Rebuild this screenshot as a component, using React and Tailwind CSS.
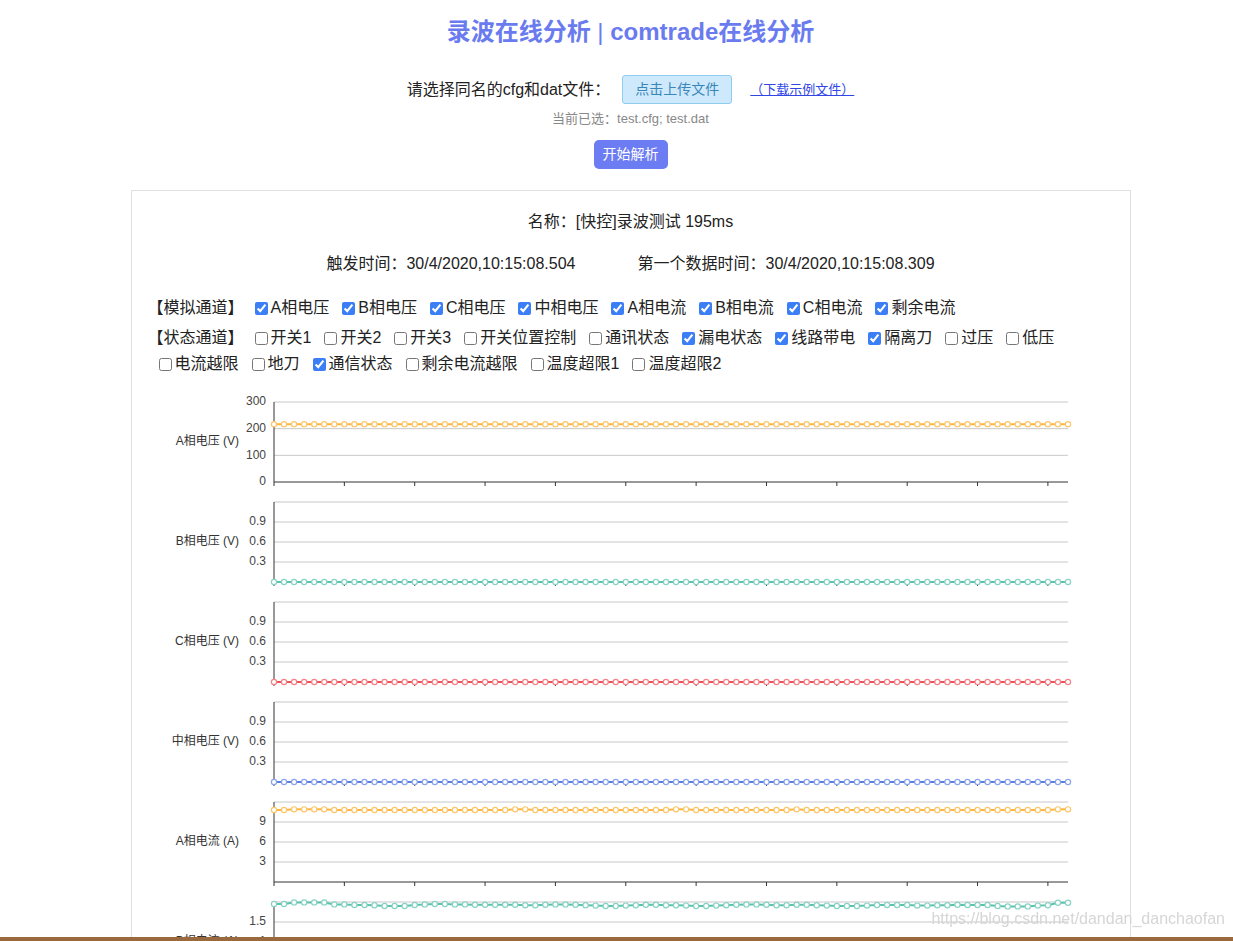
import { useState } from 'react'

const analogChannels = [
  { name: 'A相电压', checked: true },
  { name: 'B相电压', checked: true },
  { name: 'C相电压', checked: true },
  { name: '中相电压', checked: true },
  { name: 'A相电流', checked: true },
  { name: 'B相电流', checked: true },
  { name: 'C相电流', checked: true },
  { name: '剩余电流', checked: true },
]

const statusChannels = [
  { name: '开关1', checked: false },
  { name: '开关2', checked: false },
  { name: '开关3', checked: false },
  { name: '开关位置控制', checked: false },
  { name: '通讯状态', checked: false },
  { name: '漏电状态', checked: true },
  { name: '线路带电', checked: true },
  { name: '隔离刀', checked: true },
  { name: '过压', checked: false },
  { name: '低压', checked: false },
  { name: '电流越限', checked: false },
  { name: '地刀', checked: false },
  { name: '通信状态', checked: true },
  { name: '剩余电流越限', checked: false },
  { name: '温度超限1', checked: false },
  { name: '温度超限2', checked: false },
]

const N = 80
const flat = (v) => Array.from({ length: N }, () => v)

// A相电流 sits around 10.8A with a couple of small bumps
const aCurrent = Array.from({ length: N }, (_, i) =>
  [2, 3, 4, 5, 24, 25, 40, 41, 52, 78, 79].includes(i) ? 10.9 : 10.8
)

const bCurrent = [
  1.95, 1.95, 1.99, 1.99, 1.99, 1.99, 1.94, 1.94, 1.925, 1.925,
  1.92, 1.9, 1.9, 1.9, 1.925, 1.94, 1.95, 1.95, 1.94, 1.94,
  1.93, 1.93, 1.93, 1.93, 1.93, 1.92, 1.92, 1.93, 1.94, 1.94,
  1.93, 1.92, 1.91, 1.9, 1.9, 1.91, 1.92, 1.93, 1.93, 1.92,
  1.92, 1.91, 1.9, 1.9, 1.91, 1.92, 1.93, 1.94, 1.94, 1.93,
  1.92, 1.92, 1.93, 1.93, 1.92, 1.91, 1.9, 1.9, 1.9, 1.91,
  1.925, 1.925, 1.925, 1.925, 1.91, 1.91, 1.92, 1.92, 1.93, 1.925,
  1.925, 1.925, 1.9, 1.89, 1.89, 1.89, 1.91, 1.92, 1.98, 1.98,
]

const cCurrent = Array.from({ length: N }, (_, i) => 1.2 + Math.sin(i / 6) * 0.04)
const residual = Array.from({ length: N }, (_, i) => 18 + Math.cos(i / 5) * 0.6)

const charts = [
  { name: 'A相电压', unit: 'V', max: 300, grid: [100, 200, 300], labels: [0, 100, 200, 300], color: '#fdb641', marker: '#fcc66a', values: flat(217) },
  { name: 'B相电压', unit: 'V', max: 1.2, grid: [0.3, 0.6, 0.9, 1.2], labels: [0.3, 0.6, 0.9], color: '#5bc2ae', marker: '#86d3c4', values: flat(0) },
  { name: 'C相电压', unit: 'V', max: 1.2, grid: [0.3, 0.6, 0.9, 1.2], labels: [0.3, 0.6, 0.9], color: '#ef5058', marker: '#f48288', values: flat(0) },
  { name: '中相电压', unit: 'V', max: 1.2, grid: [0.3, 0.6, 0.9, 1.2], labels: [0.3, 0.6, 0.9], color: '#5a7de2', marker: '#8aa3ec', values: flat(0) },
  { name: 'A相电流', unit: 'A', max: 12, grid: [3, 6, 9, 12], labels: [3, 6, 9], color: '#fdb641', marker: '#fcc66a', values: aCurrent },
  { name: 'B相电流', unit: 'A', max: 2, grid: [0.5, 1, 1.5, 2], labels: [0.5, 1, 1.5], color: '#5bc2ae', marker: '#86d3c4', values: bCurrent },
  { name: 'C相电流', unit: 'A', max: 1.5, grid: [0.5, 1, 1.5], labels: [0.5, 1], color: '#ef5058', marker: '#f48288', values: cCurrent },
  { name: '剩余电流', unit: 'mA', max: 20, grid: [5, 10, 15, 20], labels: [5, 10, 15], color: '#5a7de2', marker: '#8aa3ec', values: residual },
]

const PLOT_L = 142
const PLOT_R = 936
const PLOT_T = 10
const PLOT_H = 80

const WaveChart = ({ name, unit, max, grid, labels, color, marker, values }) => {
  const step = (PLOT_R - PLOT_L) / (values.length - 1)
  const y = (v) => PLOT_T + PLOT_H - (v / max) * PLOT_H
  const pts = values.map((v, i) => [PLOT_L + i * step, y(v)])
  const ticks = []
  for (let i = 0; i < values.length; i += 7) ticks.push(PLOT_L + i * step)

  return (
    <svg width="997" height="100" className="block">
      {grid.map((g) => (
        <line key={g} x1={PLOT_L} x2={PLOT_R} y1={y(g)} y2={y(g)} stroke="#c8c8c8" strokeWidth="1" />
      ))}
      {labels.map((l) => (
        <text key={l} x="134" y={y(l)} textAnchor="end" dominantBaseline="middle" fontSize="12" fill="#444">
          {l}
        </text>
      ))}
      <text x="107" y="50" textAnchor="end" dominantBaseline="middle" fontSize="12" fill="#333">
        {name} ({unit})
      </text>
      <line x1={PLOT_L} x2={PLOT_L} y1={PLOT_T} y2={PLOT_T + PLOT_H} stroke="#333" strokeWidth="1" />
      <line x1={PLOT_L} x2={PLOT_R} y1={PLOT_T + PLOT_H} y2={PLOT_T + PLOT_H} stroke="#333" strokeWidth="1" />
      {ticks.map((t) => (
        <line key={t} x1={t} x2={t} y1={PLOT_T + PLOT_H} y2={PLOT_T + PLOT_H + 4} stroke="#333" strokeWidth="1" />
      ))}
      <polyline
        points={pts.map((p) => p.join(',')).join(' ')}
        fill="none"
        stroke={color}
        strokeWidth="2"
        strokeLinejoin="round"
      />
      {pts.map((p, i) => (
        <circle key={i} cx={p[0]} cy={p[1]} r="2.6" fill="#fff" stroke={marker} strokeWidth="1.2" />
      ))}
    </svg>
  )
}

const ChannelItem = ({ name, checked }) => {
  const [on, setOn] = useState(checked)
  return (
    <label className="inline-flex items-center ml-[11px] mr-[2px] whitespace-nowrap">
      <input
        type="checkbox"
        checked={on}
        onChange={() => setOn(!on)}
        className="m-0 mr-[3px] w-[13px] h-[13px] accent-[#3b7ef5]"
      />
      <span>{name}</span>
    </label>
  )
}

const App = () => {
  return (
    <div className="min-h-screen bg-white pl-[28px] pt-[16px] text-[#222] font-['Liberation_Sans','Noto_Sans_CJK_SC',sans-serif]">
      <h1 className="text-center text-[24px] leading-[32px] font-bold text-[#6a7bef]">
        录波在线分析 <span className="font-normal">|</span> comtrade在线分析
      </h1>

      <div className="mt-[27px] h-[29px] flex items-center justify-center">
        <span className="text-[16px]">请选择同名的cfg和dat文件：</span>
        <button className="ml-[12px] h-[29px] px-[12px] rounded-[3px] border border-[#8fcdf0] bg-[#cde9fb] text-[14px] text-[#3a86b8]">
          点击上传文件
        </button>
        <a href="#" className="ml-[18px] text-[13px] text-[#2f45e6] underline">
          （下载示例文件）
        </a>
      </div>

      <p className="mt-[5px] text-center text-[13px] leading-[20px] text-[#888]">当前已选：test.cfg; test.dat</p>

      <div className="mt-[11px] flex justify-center">
        <button className="h-[29px] px-[9px] rounded-[5px] bg-[#6c7cf2] text-[14px] text-white">开始解析</button>
      </div>

      <div className="mt-[21px] mx-auto w-[1000px] border border-[#e0e0e0] pb-[40px]">
        <p className="pt-[20px] text-center text-[16px] leading-[22px]">名称：[快控]录波测试 195ms</p>
        <div className="mt-[20px] flex justify-center gap-[62px] text-[16px] leading-[22px]">
          <span>触发时间：30/4/2020,10:15:08.504</span>
          <span>第一个数据时间：30/4/2020,10:15:08.309</span>
        </div>

        <div className="mt-[20px] px-[16px] text-[16px] leading-[26px]">
          <div className="flex flex-wrap items-center">
            <span>【模拟通道】</span>
            {analogChannels.map((c) => (
              <ChannelItem key={c.name} {...c} />
            ))}
          </div>
          <div className="mt-[4px] flex flex-wrap items-center">
            <span>【状态通道】</span>
            {statusChannels.map((c) => (
              <ChannelItem key={c.name} {...c} />
            ))}
          </div>
        </div>

        <div className="mt-[15px]">
          {charts.map((c) => (
            <WaveChart key={c.name} {...c} />
          ))}
        </div>
      </div>

      <div className="fixed right-[8px] bottom-[10px] text-[16px] text-[#d6d6d6] pointer-events-none">
        https://blog.csdn.net/dandan_danchaofan
      </div>
      <div className="fixed left-0 right-0 bottom-0 h-[4px] bg-[#9a6a3e]" />
    </div>
  )
}

export default App
